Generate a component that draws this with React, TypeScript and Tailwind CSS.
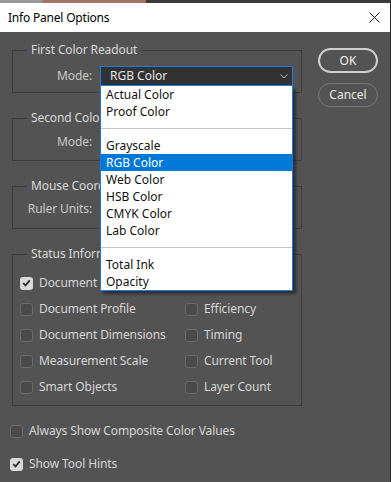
import React from "react";

const font = { fontFamily: '"Noto Sans", "Open Sans", sans-serif' };

function Check({ checked }: { checked?: boolean }) {
  return checked ? (
    <span className="flex h-[13px] w-[13px] shrink-0 items-center justify-center rounded-[3px] bg-[#d9d9d9]">
      <svg width="9" height="8" viewBox="0 0 9 8">
        <path d="M1.2 4.2 L3.5 6.4 L7.8 1.4" fill="none" stroke="#2e2e2e" strokeWidth="1.8" />
      </svg>
    </span>
  ) : (
    <span className="h-[13px] w-[13px] shrink-0 rounded-[3px] border border-[#6a6a6a] bg-[#4a4a4a]" />
  );
}

function CheckRow({ label, checked }: { label: string; checked?: boolean }) {
  return (
    <div className="flex h-[26px] items-center gap-[6px] whitespace-nowrap text-[12px] tracking-[-0.1px] text-[#d6d6d6]">
      <Check checked={checked} />
      <span>{label}</span>
    </div>
  );
}

function Chevron() {
  return (
    <svg width="8" height="5" viewBox="0 0 8 5" className="shrink-0">
      <path d="M0.5 0.5 L4 4 L7.5 0.5" fill="none" stroke="#bdbdbd" strokeWidth="1" />
    </svg>
  );
}

function Select({ value, open, children }: { value: string; open?: boolean; children?: React.ReactNode }) {
  return (
    <div className="relative ml-[8px] w-[193px]">
      <div
        className={
          open
            ? "flex h-[20px] items-center justify-between border border-[#1a7ce0] bg-[#323232] pl-[9px] pr-[4px] text-[12px] text-[#e6e6e6]"
            : "flex h-[20px] items-center justify-between border border-[#3c3c3c] bg-[#3a3a3a] pl-[9px] pr-[4px] text-[12px] text-[#e6e6e6]"
        }
      >
        <span>{value}</span>
        <Chevron />
      </div>
      {children}
    </div>
  );
}

function Group({ title, children, className }: { title: string; children: React.ReactNode; className?: string }) {
  return (
    <fieldset className={"ml-[2px] w-[290px] border border-[#3d3d3d] " + (className ?? "")}>
      <legend className="ml-[14px] px-[4px] text-[12px] leading-4 tracking-[-0.1px] text-[#d8d8d8]">{title}</legend>
      {children}
    </fieldset>
  );
}

function ModeRow({
  label,
  value,
  open,
  children,
  className,
}: {
  label: string;
  value: string;
  open?: boolean;
  children?: React.ReactNode;
  className: string;
}) {
  return (
    <div className={"flex items-center " + className}>
      <span className="w-[79px] text-right text-[12px] tracking-[-0.1px] text-[#c9c9c9]">{label}</span>
      <Select value={value} open={open}>
        {children}
      </Select>
    </div>
  );
}

const items: (string | null)[] = [
  "Actual Color",
  "Proof Color",
  null,
  "Grayscale",
  "RGB Color",
  "Web Color",
  "HSB Color",
  "CMYK Color",
  "Lab Color",
  null,
  "Total Ink",
  "Opacity",
];

function Dropdown() {
  return (
    <div className="absolute left-0 top-full z-10 w-[193px] border-x border-b border-[#1a7ce0] bg-white shadow-[3px_3px_3px_rgba(0,0,0,0.45)]">
      {items.map((it, i) =>
        it === null ? (
          <div key={i} className="flex h-[17px] items-center">
            <div className="h-px w-full bg-[#c4c4c4]" />
          </div>
        ) : (
          <div
            key={i}
            className={
              it === "RGB Color"
                ? "flex h-[17px] items-center bg-[#0078d7] pl-[5px] text-[12px] text-white"
                : "flex h-[17px] items-center pl-[5px] text-[12px] text-[#111]"
            }
          >
            {it}
          </div>
        )
      )}
    </div>
  );
}

export default function App() {
  return (
    <div className="flex h-[482px] w-[391px] flex-col overflow-hidden border-r border-[#2a2a2a] bg-[#535353]" style={font}>
      <div className="flex h-[3px] shrink-0">
        <div className="w-[42px] bg-[#9a9a9a]" />
        <div className="w-[104px] bg-[#a27564]" />
        <div className="flex-1 bg-[#3a3a3a]" />
      </div>
      <div className="flex h-[29px] shrink-0 items-center justify-between bg-white pl-[8px] pr-[10px] text-[12px] tracking-[-0.2px] text-black">
        <span>Info Panel Options</span>
        <svg width="11" height="11" viewBox="0 0 11 11">
          <path d="M0.5 0.5 L10.5 10.5 M10.5 0.5 L0.5 10.5" stroke="#111" strokeWidth="1" />
        </svg>
      </div>
      <div className="flex flex-1 pl-[10px] pt-[10px]">
        <div className="flex w-[292px] flex-col">
          <Group title="First Color Readout">
            <ModeRow label="Mode:" value="RGB Color" open className="pb-[6px] pt-[8px]">
              <Dropdown />
            </ModeRow>
          </Group>
          <Group title="Second Color Readout" className="mt-[17px]">
            <ModeRow label="Mode:" value="CMYK Color" className="pb-[8px] pt-[6px]" />
          </Group>
          <Group title="Mouse Coordinates" className="mt-[17px]">
            <ModeRow label="Ruler Units:" value="Pixels" className="pb-[9px] pt-[5px]" />
          </Group>
          <Group title="Status Information" className="mt-[17px]">
            <div className="grid grid-cols-[165px_1fr] pb-[5px] pl-[7px] pt-[8px]">
              <CheckRow label="Document Sizes" checked />
              <CheckRow label="Scratch Sizes" />
              <CheckRow label="Document Profile" />
              <CheckRow label="Efficiency" />
              <CheckRow label="Document Dimensions" />
              <CheckRow label="Timing" />
              <CheckRow label="Measurement Scale" />
              <CheckRow label="Current Tool" />
              <CheckRow label="Smart Objects" />
              <CheckRow label="Layer Count" />
            </div>
          </Group>
          <div className="mt-[15px] flex h-5 items-center gap-[6px] text-[12px] tracking-[-0.1px] text-[#d6d6d6]">
            <Check />
            <span>Always Show Composite Color Values</span>
          </div>
          <div className="mt-[13px] flex h-5 items-center gap-[6px] text-[12px] tracking-[-0.1px] text-[#d6d6d6]">
            <Check checked />
            <span>Show Tool Hints</span>
          </div>
        </div>
        <div className="ml-[16px] flex flex-col gap-[10px] pt-[6px]">
          <button className="flex h-[25px] w-[60px] items-center justify-center rounded-full border-2 border-[#cfcfcf] text-[12px] text-[#f2f2f2]">
            OK
          </button>
          <button className="flex h-[24px] w-[60px] items-center justify-center rounded-full border border-[#777] text-[12px] text-[#e8e8e8]">
            Cancel
          </button>
        </div>
      </div>
    </div>
  );
}
